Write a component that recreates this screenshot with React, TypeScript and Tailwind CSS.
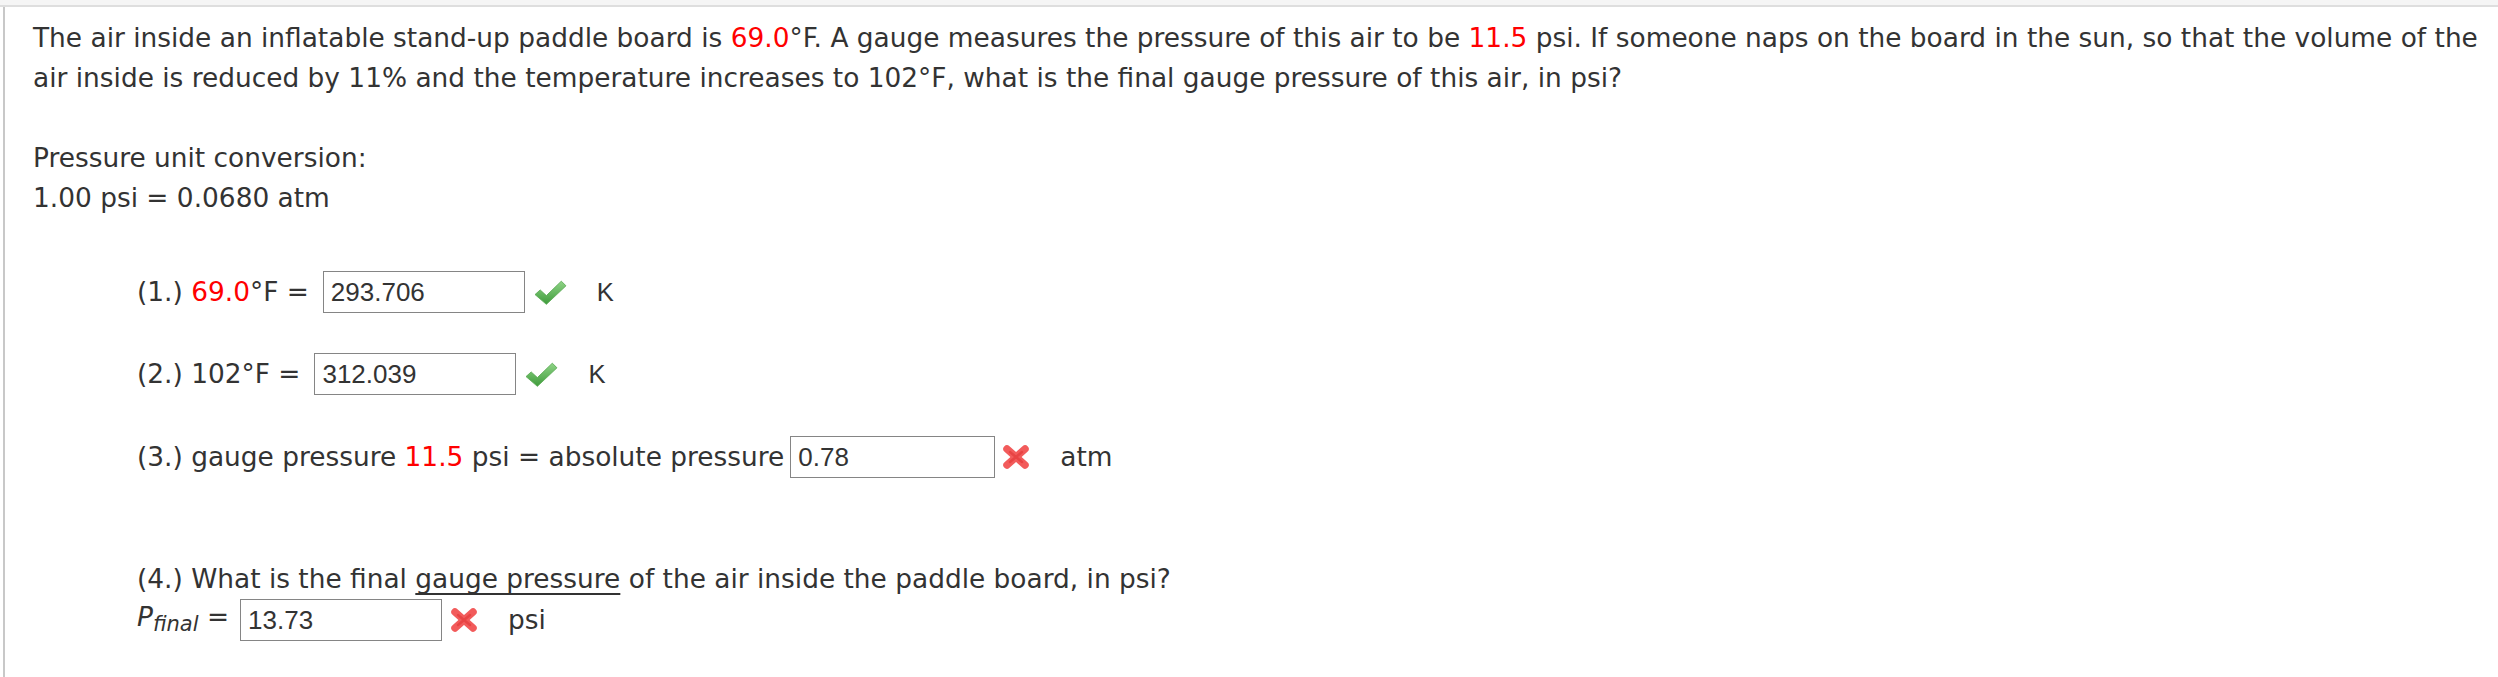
import React from "react";

const Check = ({ cls }: { cls: string }) => (
  <svg width="33" height="25" viewBox="0 0 32 24" className={"shrink-0 " + cls}>
    <defs>
      <linearGradient id="gck" x1="0" y1="0" x2="0" y2="1">
        <stop offset="0" stopColor="#8fd486" />
        <stop offset="1" stopColor="#3f9b3c" />
      </linearGradient>
    </defs>
    <path
      d="M1 14 L6 9.5 L12 15 L26.5 1 L31 5.5 L12 23.5 Z"
      fill="url(#gck)"
      stroke="#55a84f"
      strokeWidth="0.8"
      strokeLinejoin="round"
    />
  </svg>
);

const Cross = ({ cls }: { cls: string }) => (
  <svg width="28" height="26" viewBox="0 0 28 26" className={"shrink-0 blur-[0.4px] " + cls}>
    <g stroke="#f25b5b" strokeWidth="7.5" strokeLinecap="round">
      <line x1="5" y1="5" x2="23" y2="21" />
      <line x1="23" y1="5" x2="5" y2="21" />
    </g>
    <g stroke="#e84444" strokeWidth="2.5" strokeLinecap="round">
      <line x1="8" y1="8" x2="20" y2="18" />
      <line x1="20" y1="8" x2="8" y2="18" />
    </g>
  </svg>
);

const Box = ({ value, cls }: { value: string; cls: string }) => (
  <div
    className={
      "h-[42px] w-[202px] shrink-0 border border-[#858585] bg-white pl-[7px] flex items-center font-['Liberation_Sans',Arial,sans-serif] text-[26px] text-[#333] " +
      cls
    }
  >
    {value}
  </div>
);

export default function App() {
  return (
    <div className="w-[2498px] h-[677px] overflow-hidden bg-white font-['DejaVu_Sans',Verdana,sans-serif] text-[26.4px] leading-[40px] text-[#333]">
      <div className="h-[7px] bg-[#f5f5f5] border-b-2 border-[#dedede]" />
      <div className="ml-[3px] h-[670px] border-l-2 border-[#c8c8c8] pl-[28px] pt-[11px]">
        <p>
          The air inside an inflatable stand-up paddle board is{" "}
          <span className="text-[#ff0000]">69.0</span>°F. A gauge measures the pressure of this air to be{" "}
          <span className="text-[#ff0000]">11.5</span> psi. If someone naps on the board in the sun, so that the volume of the
          <br />
          air inside is reduced by 11% and the temperature increases to 102°F, what is the final gauge pressure of this air, in psi?
        </p>
        <p className="mt-[40px]">Pressure unit conversion:</p>
        <p>1.00 psi = 0.0680 atm</p>

        <div className="ml-[104px] mt-[53px] flex h-[42px] items-center">
          <span className="whitespace-pre">
            (1.) <span className="text-[#ff0000]">69.0</span>°F =
          </span>
          <Box value="293.706" cls="ml-[14px]" />
          <Check cls="ml-[9px]" />
          <span className="ml-[30px] font-['Liberation_Sans',Arial,sans-serif] text-[25.6px]">K</span>
        </div>

        <div className="ml-[104px] mt-[40px] flex h-[42px] items-center">
          <span className="whitespace-pre">(2.) 102°F =</span>
          <Box value="312.039" cls="ml-[14px]" />
          <Check cls="ml-[9px]" />
          <span className="ml-[30px] font-['Liberation_Sans',Arial,sans-serif] text-[25.6px]">K</span>
        </div>

        <div className="ml-[104px] mt-[41px] flex h-[42px] items-center">
          <span className="whitespace-pre">
            (3.) gauge pressure <span className="text-[#ff0000]">11.5</span> psi = absolute pressure
          </span>
          <Box value="0.78" cls="ml-[6px] w-[205px]" />
          <Cross cls="ml-[7px]" />
          <span className="ml-[30px]">atm</span>
        </div>

        <p className="ml-[104px] mt-[81px]">
          (4.) What is the final{" "}
          <span className="underline decoration-[2px] underline-offset-[5px]">gauge pressure</span> of the air inside the
          paddle board, in psi?
        </p>
        <div className="ml-[104px] flex h-[42px] items-center">
          <span className="whitespace-pre">
            <i>P</i>
            <i className="text-[21px] align-[-5px]">final</i> =
          </span>
          <Box value="13.73" cls="ml-[11px]" />
          <Cross cls="ml-[8px]" />
          <span className="ml-[30px]">psi</span>
        </div>
      </div>
    </div>
  );
}
